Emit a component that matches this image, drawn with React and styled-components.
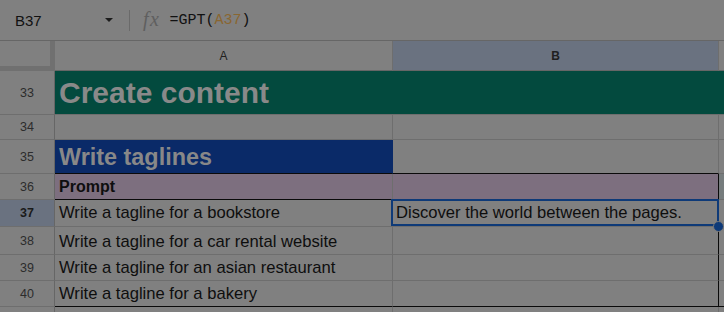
import React from "react";
import styled, { createGlobalStyle } from "styled-components";

const GRID = "#6e6e6e";
const HEAD_LINE = "#666666";
const BLACK = "#0a0a0a";
const ACTIVE = "#6a7280";
const SEL = "#0e3a78";

const GlobalStyle = createGlobalStyle`
  html, body {
    margin: 0;
    padding: 0;
    width: 724px;
    height: 312px;
    overflow: hidden;
    background: #808080;
  }
  body {
    font-family: "Liberation Sans", Arial, sans-serif;
  }
  * { box-sizing: border-box; }
`;

const Page = styled.div`
  width: 724px;
  height: 312px;
  overflow: hidden;
  background: #808080;
  display: flex;
  flex-direction: column;
`;

const FormulaBar = styled.div`
  height: 41px;
  flex: none;
  display: flex;
  align-items: center;
  border-bottom: 1px solid ${HEAD_LINE};
`;

const NameBox = styled.div`
  width: 122px;
  padding: 0 9px 0 15px;
  display: flex;
  align-items: center;
  justify-content: space-between;
  font-size: 15px;
  color: #111;
`;

const Caret = styled.span`
  width: 0;
  height: 0;
  border-left: 4.5px solid transparent;
  border-right: 4.5px solid transparent;
  border-top: 4.5px solid #1c1c1c;
`;

const Divider = styled.span`
  width: 1px;
  height: 21px;
  margin-left: 7px;
  background: #6a6a6a;
`;

const Fx = styled.span`
  margin-left: 13px;
  font-family: "Liberation Serif", "Times New Roman", serif;
  font-style: italic;
  font-size: 20px;
  letter-spacing: 1.5px;
  color: #5f5f5f;
  line-height: 1;
  margin-top: -2px;
`;

const Formula = styled.span`
  margin-left: 9px;
  font-family: "Liberation Mono", "Courier New", monospace;
  font-size: 15px;
  color: #111;
`;

const Ref = styled.span`
  color: #8a6630;
`;

const Grid = styled.div`
  display: grid;
  grid-template-columns: 55px 338px 326px 1fr;
  grid-template-rows: 30px 44px 25px 34px 26px 27px 28px 26px 26px 30px;
`;

const Corner = styled.div`
  border-right: 5px solid #707070;
  border-bottom: 5px solid #707070;
`;

const ColHead = styled.div`
  display: flex;
  align-items: center;
  justify-content: center;
  font-size: 12px;
  color: #202020;
  font-weight: ${(p) => (p.$active ? 700 : 400)};
  background: ${(p) => (p.$active ? ACTIVE : "transparent")};
  border-right: 1px solid ${GRID};
  border-bottom: 1px solid ${HEAD_LINE};
  padding-top: 1px;
`;

const RowHead = styled.div`
  display: flex;
  align-items: center;
  justify-content: center;
  font-size: 12.5px;
  color: ${(p) => (p.$active ? "#1a1a1a" : "#2c2c2c")};
  font-weight: ${(p) => (p.$active ? 700 : 400)};
  background: ${(p) => (p.$active ? ACTIVE : "transparent")};
  border-right: 1px solid ${HEAD_LINE};
  border-bottom: 1px solid ${GRID};
`;

const Cell = styled.div`
  position: relative;
  display: flex;
  align-items: flex-end;
  white-space: nowrap;
  overflow: visible;
  grid-column: ${(p) => p.$span || "auto"};
  background: ${(p) => p.$bg || "transparent"};
  color: ${(p) => p.$color || "#0e0e0e"};
  font-size: ${(p) => p.$size || 16.6}px;
  font-weight: ${(p) => (p.$bold ? 700 : 400)};
  line-height: normal;
  padding: 0 3px ${(p) => (p.$pb ?? 3)}px ${(p) => (p.$pl ?? 4)}px;
  border-right: 1px solid ${(p) => p.$right || GRID};
  border-bottom: 1px solid ${(p) => p.$bottom || GRID};
`;

const Selection = styled.div`
  position: absolute;
  top: -1px;
  left: -2px;
  right: -1px;
  bottom: 0;
  border: 2px solid ${SEL};
  pointer-events: none;
`;

const Handle = styled.div`
  position: absolute;
  right: -6px;
  bottom: -6px;
  width: 11px;
  height: 11px;
  border-radius: 50%;
  background: ${SEL};
  border: 1px solid #7c7c7c;
  z-index: 2;
`;

const prompts = [
  { n: 38, text: "Write a tagline for a car rental website" },
  { n: 39, text: "Write a tagline for an asian restaurant" },
  { n: 40, text: "Write a tagline for a bakery", last: true },
];

export default function App() {
  return (
    <Page>
      <GlobalStyle />
      <FormulaBar>
        <NameBox>
          <span>B37</span>
          <Caret />
        </NameBox>
        <Divider />
        <Fx>fx</Fx>
        <Formula>
          =GPT(<Ref>A37</Ref>)
        </Formula>
      </FormulaBar>

      <Grid>
        <Corner />
        <ColHead>A</ColHead>
        <ColHead $active>B</ColHead>
        <ColHead />

        <RowHead>33</RowHead>
        <Cell $span="2 / -1" $bg="#034a3e" $color="#898989" $size={30} $bold $pb={4} $right="#034a3e">
          Create content
        </Cell>

        <RowHead>34</RowHead>
        <Cell />
        <Cell />
        <Cell />

        <RowHead>35</RowHead>
        <Cell $bg="#0a2a68" $color="#888888" $size={23.4} $bold $pb={2} $bottom={BLACK} $right="#0a2a68">
          Write taglines
        </Cell>
        <Cell $bottom={BLACK} />
        <Cell />

        <RowHead>36</RowHead>
        <Cell $bg="#7d6f7f" $size={16} $bold $bottom={BLACK}>
          Prompt
        </Cell>
        <Cell $bg="#7d6f7f" $bottom={BLACK} $right={BLACK} />
        <Cell $bg="#767c7d" />

        <RowHead $active>37</RowHead>
        <Cell>Write a tagline for a bookstore</Cell>
        <Cell $right={BLACK} $pl={3}>
          Discover the world between the pages.
          <Selection />
          <Handle />
        </Cell>
        <Cell />

        {prompts.map((r) => (
          <React.Fragment key={r.n}>
            <RowHead>{r.n}</RowHead>
            <Cell $pb={2.5} $bottom={r.last ? BLACK : GRID}>{r.text}</Cell>
            <Cell $right={BLACK} $bottom={r.last ? BLACK : GRID} />
            <Cell $bottom={r.last ? BLACK : GRID} />
          </React.Fragment>
        ))}

        <RowHead />
        <Cell />
        <Cell />
        <Cell />
      </Grid>
    </Page>
  );
}
